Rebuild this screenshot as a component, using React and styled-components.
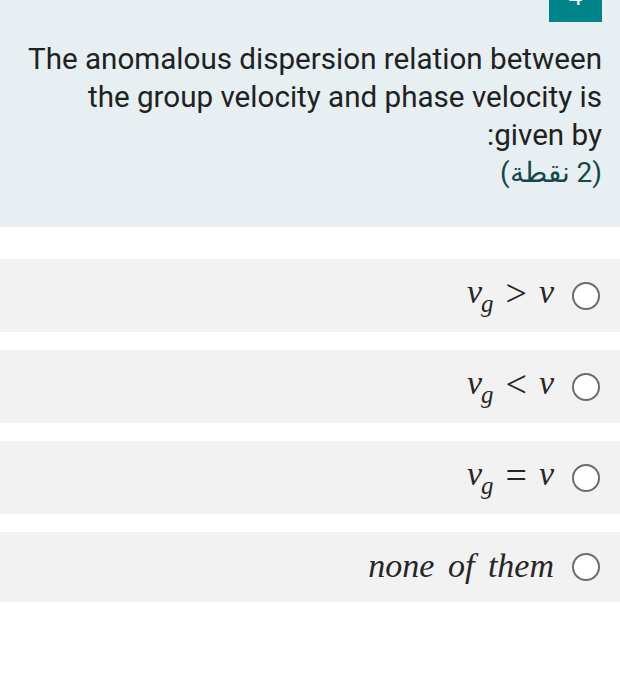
import React from "react";
import styled, { createGlobalStyle } from "styled-components";

const Global = createGlobalStyle`
  html, body {
    margin: 0;
    padding: 0;
    background: #ffffff;
  }
  body {
    font-family: Roboto, "Liberation Sans", sans-serif;
  }
`;

const Page = styled.div`
  width: 620px;
  display: flex;
  flex-direction: column;
`;

const Header = styled.div`
  background: #e7eff2;
  height: 227px;
  box-sizing: border-box;
  padding: 0 18px 0 22px;
  display: flex;
  flex-direction: column;
  align-items: flex-end;
`;

const Badge = styled.div`
  width: 53px;
  height: 22px;
  background: #00848a;
  color: #ffffff;
  font-size: 24px;
  line-height: 24px;
  text-align: center;
  overflow: hidden;
  display: flex;
  justify-content: center;
  align-items: flex-end;
`;

const BadgeNum = styled.span`
  margin-bottom: 13px;
`;

const Question = styled.div`
  direction: rtl;
  text-align: right;
  margin-top: 18px;
  font-size: 29.6px;
  line-height: 38px;
  color: #212121;
  width: 100%;
`;

const Points = styled.div`
  direction: rtl;
  text-align: right;
  font-size: 28px;
  line-height: 38px;
  color: #15474b;
  font-family: Roboto, "Noto Sans", sans-serif;
`;

const Options = styled.div`
  margin-top: 32px;
  display: flex;
  flex-direction: column;
  gap: 18px;
`;

const Row = styled.label`
  background: #f2f2f2;
  height: ${(p) => p.h || 73}px;
  display: flex;
  flex-direction: row;
  align-items: center;
  justify-content: flex-end;
  padding-right: 20px;
  box-sizing: border-box;
  gap: 18px;
`;

const Math = styled.span`
  font-family: "Liberation Serif", "DejaVu Serif", serif;
  font-style: italic;
  font-size: 34px;
  color: #262626;
  white-space: nowrap;
  word-spacing: 5px;
  margin-top: ${(p) => p.mt || 0}px;
`;

const Sub = styled.sub`
  font-size: 25px;
  vertical-align: -9px;
  margin-left: -1px;
`;

const Op = styled.span`
  font-style: normal;
  font-size: 38px;
  line-height: 1;
  vertical-align: -3px;
  margin: 0 12px 0 12px;
`;

const Radio = styled.span`
  width: 24px;
  height: 24px;
  border: 2px solid #6d6d6d;
  border-radius: 50%;
  background: #ffffff;
  flex-shrink: 0;
`;

const options = [
  { op: ">" },
  { op: "<" },
  { op: "=" },
];

export default function App() {
  return (
    <Page>
      <Global />
      <Header>
        <Badge>
          <BadgeNum>4</BadgeNum>
        </Badge>
        <Question>
          The anomalous dispersion relation between the group velocity and
          phase velocity is given by:
        </Question>
        <Points>(2 نقطة)</Points>
      </Header>
      <Options>
        {options.map((o, i) => (
          <Row key={i}>
            <Math>
              v<Sub>g</Sub>
              <Op>{o.op}</Op>v
            </Math>
            <Radio />
          </Row>
        ))}
        <Row h={70}>
          <Math mt={-2}>none of them</Math>
          <Radio />
        </Row>
      </Options>
    </Page>
  );
}
